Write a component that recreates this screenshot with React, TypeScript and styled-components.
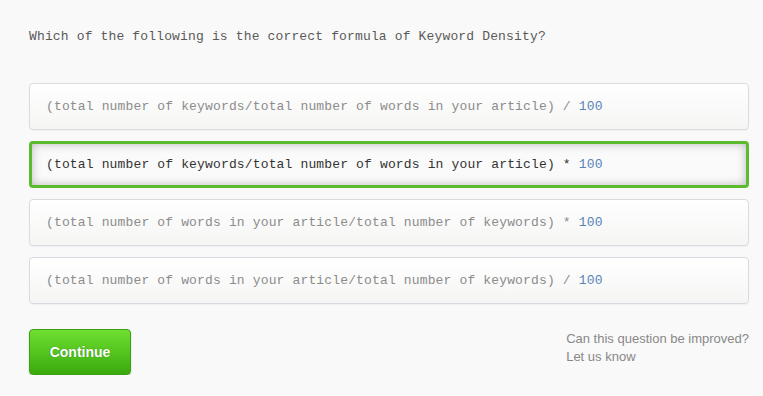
import React, { useState } from "react";
import styled, { createGlobalStyle } from "styled-components";

const GlobalStyle = createGlobalStyle`
  html, body {
    margin: 0;
    padding: 0;
    background: #f9f9f9;
  }
`;

const Page = styled.div`
  width: 720px;
  padding: 29px 0 0 29px;
`;

const Question = styled.div`
  font-family: "Liberation Mono", "Courier New", monospace;
  font-size: 13px;
  line-height: 16px;
  color: #5a5a5a;
  letter-spacing: 0.15px;
`;

const Options = styled.div`
  display: flex;
  flex-direction: column;
  gap: 11px;
  margin-top: 38px;
`;

const Option = styled.div<{ $selected?: boolean }>`
  box-sizing: border-box;
  height: 47px;
  display: flex;
  align-items: center;
  padding-left: ${(p) => (p.$selected ? "14px" : "16px")};
  border-radius: 4px;
  border: ${(p) => (p.$selected ? "3px solid #5bbb2e" : "1px solid #d8dbe0")};
  background: ${(p) =>
    p.$selected ? "#fafafa" : "linear-gradient(#ffffff, #f5f5f4)"};
  box-shadow: ${(p) =>
    p.$selected
      ? "inset 0 0 10px rgba(0, 0, 0, 0.25)"
      : "0 1px 1px rgba(0, 0, 0, 0.04)"};
  font-family: "Liberation Mono", "Courier New", monospace;
  font-size: 13px;
  line-height: 16px;
  letter-spacing: 0.15px;
  color: ${(p) => (p.$selected ? "#333" : "#8c8c8c")};
  cursor: pointer;
`;

const Num = styled.span`
  color: #5682b8;
`;

const Footer = styled.div`
  display: flex;
  justify-content: space-between;
  align-items: flex-start;
  margin-top: 25px;
`;

const ContinueButton = styled.button`
  width: 102px;
  height: 46px;
  border-radius: 4px;
  border: 1px solid #3c9e12;
  background: linear-gradient(#6fe030, #3aa90e);
  box-shadow: 0 1px 2px rgba(0, 0, 0, 0.2);
  color: #fff;
  font-family: "Liberation Sans", Arial, sans-serif;
  font-weight: bold;
  font-size: 14px;
  text-shadow: 0 0 1px rgba(0, 60, 0, 0.5);
  cursor: pointer;
`;

const Feedback = styled.div`
  margin-top: 1px;
  font-family: "Liberation Sans", Arial, sans-serif;
  font-size: 13px;
  line-height: 18px;
  color: #888;
`;

const options = [
  { text: "(total number of keywords/total number of words in your article) / ", n: "100" },
  { text: "(total number of keywords/total number of words in your article) * ", n: "100" },
  { text: "(total number of words in your article/total number of keywords) * ", n: "100" },
  { text: "(total number of words in your article/total number of keywords) / ", n: "100" },
];

export default function App() {
  const [selected, setSelected] = useState(1);

  return (
    <Page>
      <GlobalStyle />
      <Question>Which of the following is the correct formula of Keyword Density?</Question>
      <Options>
        {options.map((o, i) => (
          <Option key={i} $selected={selected === i} onClick={() => setSelected(i)}>
            <span>
              {o.text}
              <Num>{o.n}</Num>
            </span>
          </Option>
        ))}
      </Options>
      <Footer>
        <ContinueButton>Continue</ContinueButton>
        <Feedback>
          Can this question be improved?
          <br />
          Let us know
        </Feedback>
      </Footer>
    </Page>
  );
}
